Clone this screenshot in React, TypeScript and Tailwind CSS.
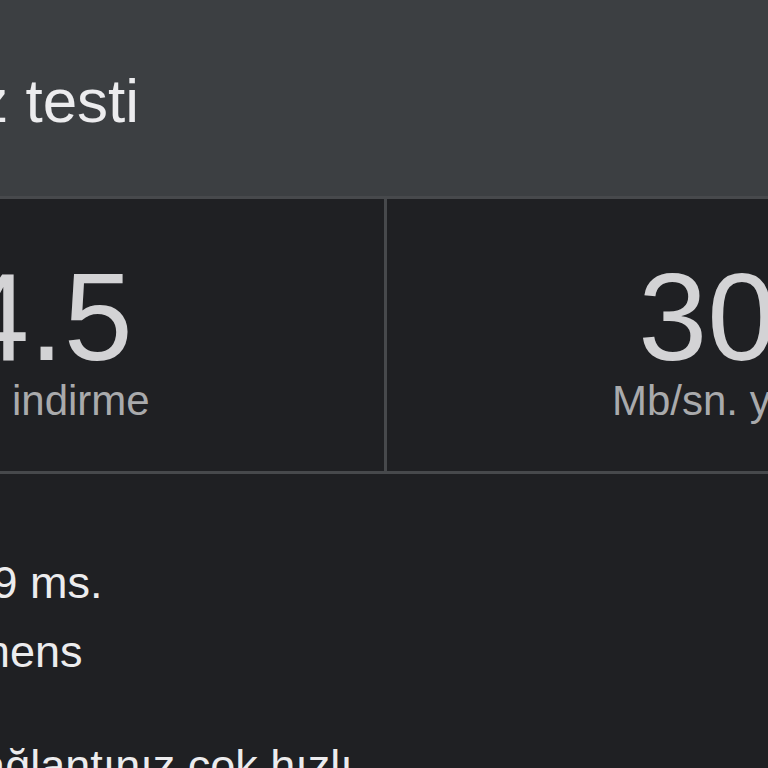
type Stat = {
  value: string
  label: string
}

const stats: Stat[] = [
  { value: "94.5", label: "Mb/sn. indirme" },
  { value: "30.2", label: "Mb/sn. yükleme" },
]

export default function App() {
  return (
    <div
      className="w-[768px] h-[768px] overflow-hidden bg-[#1f2023]"
      style={{ fontFamily: '"Liberation Sans", Arial, sans-serif' }}
    >
      <div className="w-[1494px] -ml-[360px]">
        <div className="h-[196px] bg-[#3c3f42] pl-[58px] pt-[70px]">
          <h1 className="text-[62px] leading-none text-[#ececee] whitespace-nowrap">İnternet hız testi</h1>
        </div>

        <div className="flex border-t-[3px] border-b-[3px] border-[#47494c]">
          {stats.map((s, i) => (
            <div
              key={s.label}
              className={
                i === 0
                  ? "w-[747px] h-[272px] pt-[57px] flex flex-col items-center border-r-[3px] border-[#47494c]"
                  : "w-[744px] h-[272px] pt-[57px] flex flex-col items-center"
              }
            >
              <div className="text-[124px] leading-[122px] text-[#d3d3d5] whitespace-nowrap">{s.value}</div>
              <div className="text-[42px] leading-none mt-[2px] text-[#a9aaac] whitespace-nowrap">{s.label}</div>
            </div>
          ))}
        </div>

        <div className="pl-[150px] pt-[74px] text-[45px] text-[#ececee] whitespace-nowrap">
          <div className="leading-[69px]">Gecikme: 9 ms.</div>
          <div className="leading-[69px]">Host: Siemens</div>
          <div className="leading-[69px] mt-[45px]">İnternet bağlantınız çok hızlı.</div>
        </div>
      </div>
    </div>
  )
}
